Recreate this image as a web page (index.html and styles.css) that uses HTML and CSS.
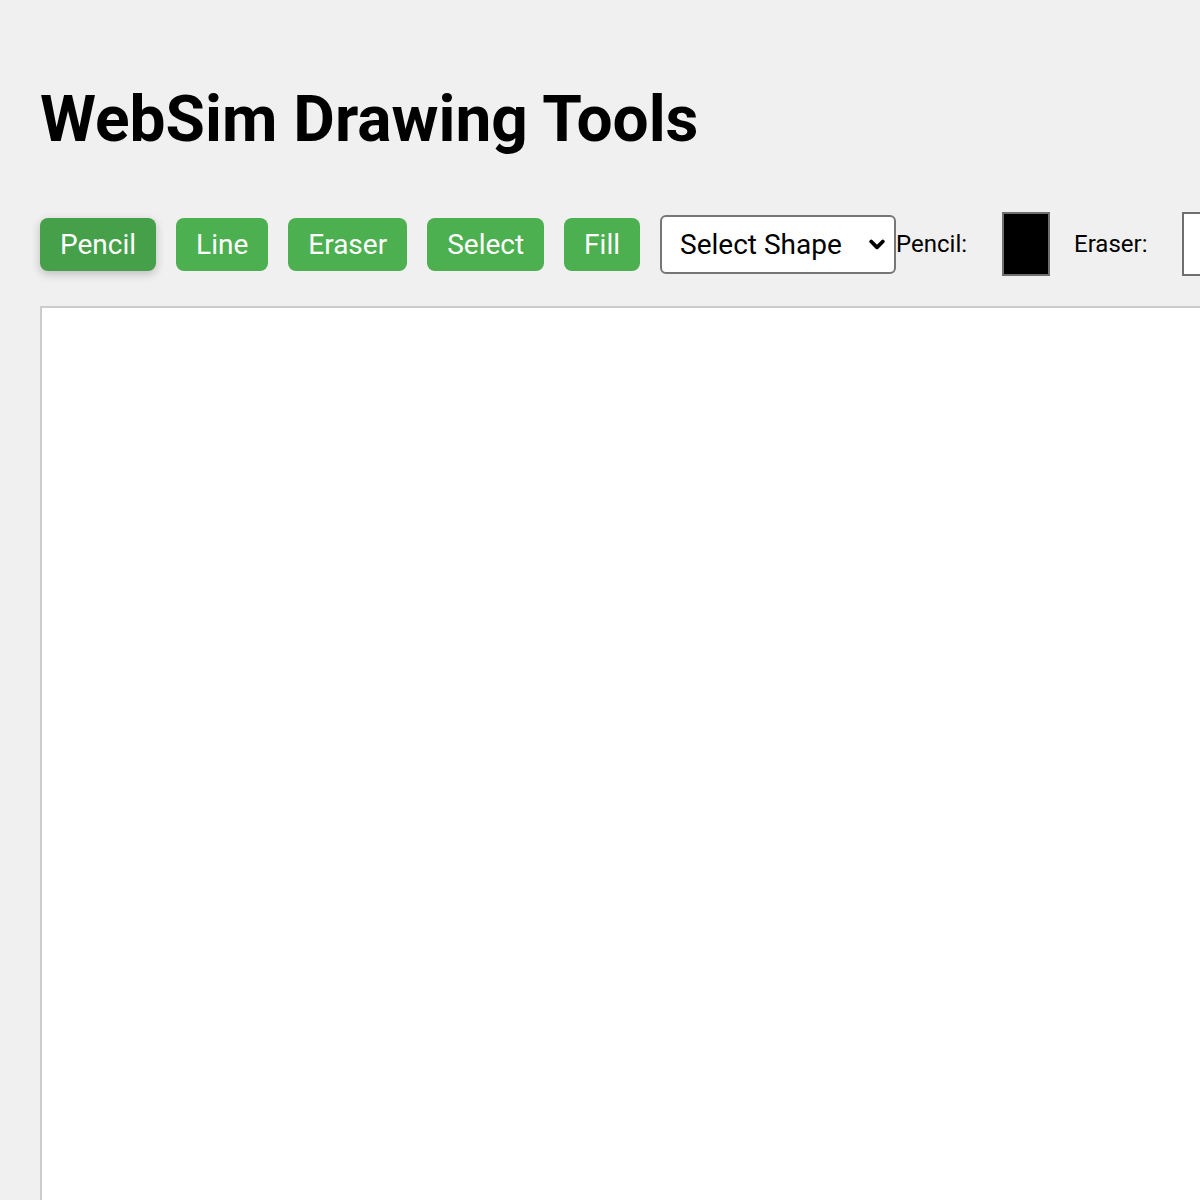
FILE: index.html
```html
<!DOCTYPE html>
<html lang="en">
<head>
<meta charset="utf-8">
<title>WebSim Drawing Tools</title>
<link rel="stylesheet" href="styles.css">
</head>
<body>
<h1 class="title">WebSim Drawing Tools</h1>
<div class="toolbar">
  <button class="tool active">Pencil</button>
  <button class="tool">Line</button>
  <button class="tool">Eraser</button>
  <button class="tool">Select</button>
  <button class="tool">Fill</button>
  <div class="select-wrap">
    <select class="shape-select">
      <option>Select Shape</option>
      <option>Rectangle</option>
      <option>Circle</option>
    </select>
    <svg class="chevron" width="16" height="11" viewBox="0 0 16 11"><path d="M2.2 2.5 L8 8.3 L13.8 2.5" fill="none" stroke="#000" stroke-width="3.8" stroke-linecap="round" stroke-linejoin="round"/></svg>
  </div>
  <label class="color-label">Pencil:</label>
  <span class="swatch swatch-black"></span>
  <label class="color-label">Eraser:</label>
  <span class="swatch swatch-white"></span>
</div>
<canvas class="board"></canvas>
</body>
</html>
```

FILE: styles.css
```css
html, body {
  overflow: hidden;
}
body {
  margin: 0;
  padding: 40px;
  background: #f0f0f0;
  font-family: Roboto, "Liberation Sans", Arial, sans-serif;
  color: #000;
}
.title {
  font-size: 64px;
  font-weight: 700;
  line-height: normal;
  margin: 42px 0 55px;
  white-space: nowrap;
}
.toolbar {
  display: flex;
  align-items: center;
  flex-wrap: nowrap;
  height: 64px;
  margin-bottom: 30px;
  white-space: nowrap;
}
.tool {
  flex-shrink: 0;
  font-family: Roboto, "Liberation Sans", Arial, sans-serif;
  font-size: 28px;
  line-height: normal;
  padding: 10px 20px;
  margin: 0 20px 0 0;
  border: none;
  border-radius: 8px;
  background: #4caf50;
  color: #fff;
  cursor: pointer;
}
.tool.active {
  background: #45a049;
  box-shadow: 0 3px 10px rgba(0, 0, 0, 0.22);
}
.select-wrap {
  position: relative;
  flex-shrink: 0;
  width: 236px;
  height: 59px;
}
.shape-select {
  appearance: none;
  -webkit-appearance: none;
  width: 236px;
  height: 59px;
  box-sizing: border-box;
  padding: 0 40px 0 18px;
  border: 2px solid #767676;
  border-radius: 6px;
  background: #fff;
  font-family: Roboto, "Liberation Sans", Arial, sans-serif;
  font-size: 28px;
  color: #000;
}
.chevron {
  position: absolute;
  right: 11px;
  top: 24px;
  pointer-events: none;
}
.color-label {
  flex-shrink: 0;
  font-size: 24px;
  margin: 0 35px 0 0;
}
.swatch {
  flex-shrink: 0;
  display: block;
  box-sizing: border-box;
  width: 48px;
  height: 64px;
  border: 2px solid #6f6f6f;
  margin-right: 24px;
}
.swatch-black {
  background: #000;
}
.swatch-white {
  background: #fff;
}
.board {
  display: block;
  width: 1600px;
  height: 1200px;
  border: 2px solid #ccc;
  background: #fff;
}
```
